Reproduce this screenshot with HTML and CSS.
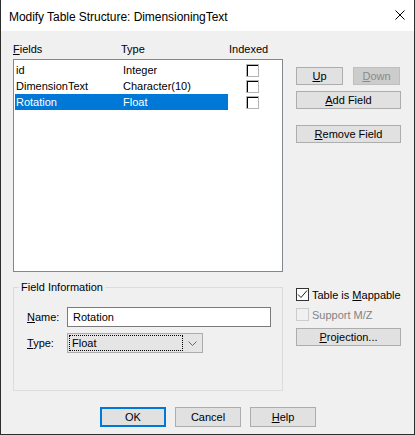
FILE: index.html
```html
<!DOCTYPE html>
<html>
<head>
<meta charset="utf-8">
<link rel="stylesheet" href="styles.css">
</head>
<body>
<div class="window">
  <div class="titlebar">
    <span class="title">Modify Table Structure: DimensioningText</span>
    <svg class="close" width="10" height="10" viewBox="0 0 10 10"><path d="M0.5 0.5 L9.5 9.5 M9.5 0.5 L0.5 9.5" stroke="#000" stroke-width="1" fill="none"/></svg>
  </div>
  <div class="content">
    <div class="toprow">
      <div class="fieldscol">
        <div class="headers">
          <span class="h-name"><u>F</u>ields</span>
          <span class="h-type">Type</span>
          <span class="h-idx">Indexed</span>
        </div>
        <div class="listbox">
          <div class="row">
            <div class="cells"><span class="c-name">id</span><span class="c-type">Integer</span></div>
            <span class="chk"></span>
          </div>
          <div class="row">
            <div class="cells"><span class="c-name">DimensionText</span><span class="c-type">Character(10)</span></div>
            <span class="chk"></span>
          </div>
          <div class="row">
            <div class="cells selected"><span class="c-name">Rotation</span><span class="c-type">Float</span></div>
            <span class="chk"></span>
          </div>
        </div>
      </div>
      <div class="sidebtns">
        <div class="pair">
          <div class="btn small"><u>U</u>p</div>
          <div class="btn small disabled"><u>D</u>own</div>
        </div>
        <div class="btn wide add"><u>A</u>dd Field</div>
        <div class="btn wide remove"><u>R</u>emove Field</div>
      </div>
    </div>
    <div class="midrow">
      <fieldset class="group">
        <legend>Field Information</legend>
        <div class="frow first">
          <span class="flabel"><u>N</u>ame:</span>
          <div class="input">Rotation</div>
        </div>
        <div class="frow">
          <span class="flabel"><u>T</u>ype:</span>
          <div class="select">
            <span class="focus">Float</span>
            <svg class="chev" width="9" height="5" viewBox="0 0 9 5"><path d="M0.5 0.5 L4.5 4.5 L8.5 0.5" stroke="#6a6a6a" stroke-width="1" fill="none"/></svg>
          </div>
        </div>
      </fieldset>
      <div class="sideopts">
        <div class="opt">
          <span class="cbox checked"><svg width="11" height="11" viewBox="0 0 11 11"><path d="M1 5.5 L4 8.5 L10 1.5" stroke="#222" stroke-width="1" fill="none"/></svg></span>
          <span>Table is <u>M</u>appable</span>
        </div>
        <div class="opt dis">
          <span class="cbox"></span>
          <span>Support M/Z</span>
        </div>
        <div class="btn wide proj"><u>P</u>rojection...</div>
      </div>
    </div>
    <div class="bottom">
      <div class="btn dlg default">OK</div>
      <div class="btn dlg">Cancel</div>
      <div class="btn dlg"><u>H</u>elp</div>
    </div>
  </div>
</div>
</body>
</html>
```
FILE: styles.css
```css
* { box-sizing: border-box; }
html, body { margin: 0; padding: 0; background: #f0f0f0; }
body { font-family: "Liberation Sans", Arial, sans-serif; font-size: 11px; color: #000; }
u { text-decoration: underline; text-underline-offset: 1px; }

.window {
  width: 415px; height: 435px;
  background: #f0f0f0;
  border-left: 1px solid #2e2e2e;
  border-right: 1px solid #2e2e2e;
  border-bottom: 1px solid #2e2e2e;
  overflow: hidden;
}
.titlebar {
  height: 31px; background: #fff;
  display: flex; align-items: center; justify-content: space-between;
  padding: 2px 9px 0 8px;
}
.title { font-size: 12px; letter-spacing: -0.05px; }
.close { display: block; margin-top: -3px; }

.content { padding-left: 12px; }

.toprow { display: flex; }
.fieldscol { width: 270px; }
.headers { display: flex; height: 16px; line-height: 16px; margin-top: 10px; }
.h-name { width: 108px; }
.h-type { width: 108px; }
.listbox {
  margin-top: 2px;
  height: 213px;
  background: #fff;
  border: 1px solid #828790;
  padding: 2px 0 0 1px;
}
.row { display: flex; align-items: center; height: 16px; }
.cells { display: flex; width: 213px; height: 16px; line-height: 16px; }
.cells.selected { background: #0078d7; color: #fff; }
.c-name { width: 108px; padding-left: 1px; }
.c-type { padding-left: 0; }
.chk {
  width: 13px; height: 13px; margin-left: 18px;
  background: #fff;
  border: 1px solid #b4b4b4;
  box-shadow: inset 1px 1px 0 #000;
}

.btn {
  background: #e1e1e1;
  border: 1px solid #adadad;
  display: flex; align-items: center; justify-content: center;
  height: 18px;
}
.btn.disabled { background: #cccccc; border-color: #bfbfbf; color: #8a8a8a; }
.sidebtns { margin-left: 13px; margin-top: 36px; width: 105px; }
.pair { display: flex; gap: 10px; }
.btn.small { width: 47px; }
.btn.wide { width: 105px; }
.add { margin-top: 6px; }
.remove { margin-top: 16px; }

.midrow { display: flex; margin-top: 8px; }
.group {
  margin: 0; width: 270px; height: 111px;
  border: 1px solid #dcdcdc;
  padding: 0 0 0 13px;
}
.group legend { margin-left: -8px; padding: 0 2px; line-height: 14px; }
.frow { display: flex; align-items: center; margin-top: 6px; }
.frow.first { margin-top: 13px; }
.flabel { width: 40px; }
.input {
  width: 204px; height: 20px;
  background: #fff; border: 1px solid #7a7a7a;
  padding-left: 5px; line-height: 18px;
}
.select {
  width: 136px; height: 20px;
  background: #e5e5e5; border: 1px solid #acacac;
  display: flex; align-items: center; padding: 0 0 0 1px;
}
.focus {
  width: 114px; height: 16px; line-height: 14px;
  border: 1px dotted #000; padding-left: 2px;
}
.chev { margin-left: 5px; }

.sideopts { margin-left: 13px; margin-top: 8px; width: 105px; }
.opt { display: flex; align-items: center; height: 13px; gap: 3px; }
.opt.dis { margin-top: 7px; color: #838383; }
.cbox {
  width: 13px; height: 13px; background: #fff;
  border: 1px solid #333;
  display: flex; align-items: center; justify-content: center;
}
.cbox svg { display: block; }
.opt.dis .cbox { border-color: #cccccc; background: #f0f0f0; }
.proj { margin-top: 7px; }

.bottom { display: flex; gap: 9px; margin-top: 16px; padding-left: 87px; }
.btn.dlg { width: 66px; height: 20px; }
.btn.default { border: 2px solid #0078d7; }
```
